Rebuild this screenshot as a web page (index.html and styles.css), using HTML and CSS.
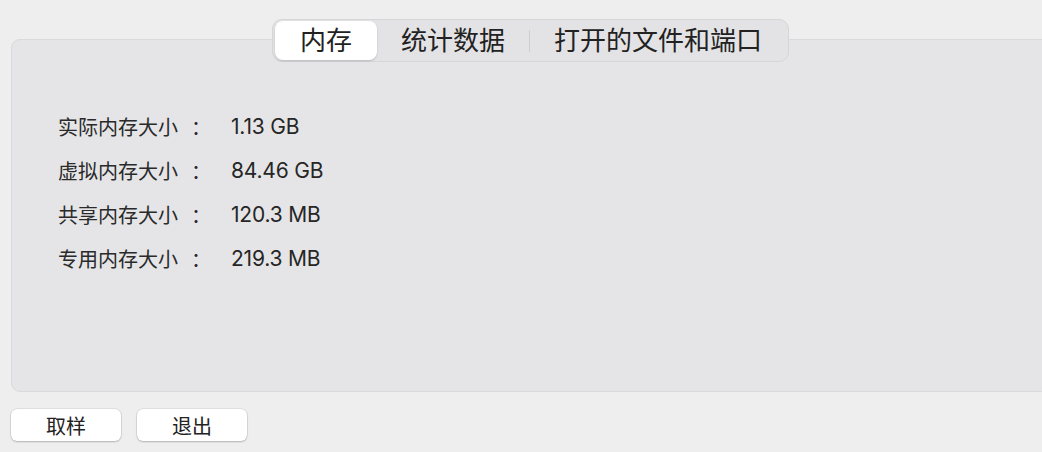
FILE: index.html
```html
<!DOCTYPE html>
<html lang="zh-CN">
<head>
    <meta charset="UTF-8">
    <title>内存</title>
    <link rel="stylesheet" href="styles.css">
</head>
<body>
    <div class="panel">
        <div class="tabs">
            <div class="tab active">内存</div>
            <div class="tab">统计数据</div>
            <div class="tab-sep"></div>
            <div class="tab">打开的文件和端口</div>
        </div>

        <div class="rows">
            <div class="row"><span class="label">实际内存大小<span class="colon">：</span></span><span class="value">1.13 GB</span></div>
            <div class="row"><span class="label">虚拟内存大小<span class="colon">：</span></span><span class="value">84.46 GB</span></div>
            <div class="row"><span class="label">共享内存大小<span class="colon">：</span></span><span class="value">120.3 MB</span></div>
            <div class="row"><span class="label">专用内存大小<span class="colon">：</span></span><span class="value">219.3 MB</span></div>
        </div>
    </div>

    <div class="buttons">
        <button class="btn">取样</button>
        <button class="btn">退出</button>
    </div>
</body>
</html>
```

FILE: styles.css
```css
body {
    margin: 0;
    background-color: #eeeeef;
    font-family: Inter, "Noto Sans CJK SC", sans-serif;
    color: #262626;
    overflow: hidden;
    width: 1042px;
    height: 452px;
}

.panel {
    margin: 39px 0 0 11px;
    width: 1039px;
    height: 353px;
    box-sizing: border-box;
    background-color: #e5e5e7;
    border: 1px solid #dadadc;
    border-radius: 9px;
}

.tabs {
    display: flex;
    align-items: center;
    width: max-content;
    height: 43px;
    box-sizing: border-box;
    margin: -21px auto 0;
    padding: 0 2px;
    background-color: #e3e3e5;
    border: 1px solid #d6d6d8;
    border-radius: 10px;
}

.tab {
    font-size: 26px;
    line-height: 39px;
    padding: 0 24px;
    color: #222;
}

.tab.active {
    background-color: #fff;
    border-radius: 8px;
    box-shadow: 0 1px 2px rgba(0, 0, 0, 0.18);
    padding: 0 25px;
}

.tab-sep {
    width: 1px;
    height: 22px;
    background-color: #cfcfd1;
}

.rows {
    padding: 42px 0 0 46px;
}

.row {
    display: flex;
    align-items: center;
    height: 44px;
    font-size: 20px;
}

.label {
    width: 173px;
    color: #2a2a2a;
}

.colon {
    padding-left: 13px;
}

.value {
    font-size: 21px;
    letter-spacing: -0.2px;
}

.buttons {
    display: flex;
    gap: 16px;
    margin: 17px 0 0 11px;
}

.btn {
    width: 110px;
    height: 32px;
    background-color: #fff;
    border: none;
    border-radius: 6px;
    box-shadow: 0 0 0 0.5px rgba(0, 0, 0, 0.12), 0 1px 2px rgba(0, 0, 0, 0.2);
    font-family: Inter, "Noto Sans CJK SC", sans-serif;
    font-size: 20px;
    color: #222;
    padding: 0;
}
```
